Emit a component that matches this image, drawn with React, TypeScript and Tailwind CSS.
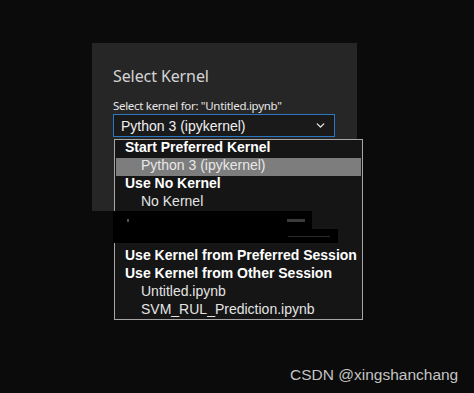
import { ChevronDown } from "lucide-react";

const rows: { label: string; bold?: boolean; selected?: boolean }[] = [
  { label: "Start Preferred Kernel", bold: true },
  { label: "Python 3 (ipykernel)", selected: true },
  { label: "Use No Kernel", bold: true },
  { label: "No Kernel" },
  { label: "" },
  { label: "" },
  { label: "Use Kernel from Preferred Session", bold: true },
  { label: "Use Kernel from Other Session", bold: true },
  { label: "Untitled.ipynb" },
  { label: "SVM_RUL_Prediction.ipynb" },
];

export default function App() {
  return (
    <div className="relative w-[474px] h-[393px] overflow-hidden bg-[#0b0b0b] font-['Liberation_Sans',Arial,sans-serif]">
      {/* dialog */}
      <div className="ml-[92px] mt-[43px] w-[265px] h-[168px] bg-[#262626] pl-[21px] pt-[23px]">
        <h2 className="text-[16px] leading-[20px] text-[#d4d4d4] font-['Noto_Sans',sans-serif] tracking-[-0.1px]">
          Select Kernel
        </h2>
        <p className="mt-[13px] text-[11.5px] leading-[14px] text-[#e6e6e6] font-['Noto_Sans',sans-serif] tracking-[-0.3px]">
          Select kernel for: "Untitled.ipynb"
        </p>
        <div className="mt-[1px] w-[222px] h-[23px] border-[1.5px] border-[#2a78c4] bg-[#1a1a1a] flex items-center justify-between pl-[7px] pr-[7px]">
          <span className="text-[14px] text-[#f0f0f0] leading-none">Python 3 (ipykernel)</span>
          <ChevronDown className="w-[13px] h-[13px] text-[#e8e8e8]" strokeWidth={2.5} />
        </div>
      </div>

      {/* dropdown list */}
      <div className="absolute left-[114px] top-[139px] w-[249px] h-[181px] border border-[#a6a6a6] bg-[#151515] px-[1px]">
        {rows.map((r, i) => (
          <div
            key={i}
            className={`h-[18px] text-[14px] leading-[15px] ${
              r.bold ? "pl-[9px] font-bold text-white" : "pl-[25px] text-[#e4e4e4]"
            } ${r.selected ? "bg-[#7d7d7d] text-[#e8e8e8]" : ""}`}
          >
            {r.label}
          </div>
        ))}
      </div>

      {/* redaction */}
      <div className="absolute left-[113px] top-[211px] flex flex-col">
        <div className="w-[199px] h-[18px] bg-black flex items-center pl-[14px] pr-[7px] justify-between">
          <span className="w-[2px] h-[3px] bg-[#555]" />
          <span className="w-[18px] h-[3px] bg-[#3a3a3a]" />
        </div>
        <div className="w-[225px] h-[14px] bg-black flex items-center pl-[175px]">
          <span className="w-[42px] h-[1px] bg-[#2a2a2a]" />
        </div>
      </div>

      {/* watermark */}
      <div className="absolute left-[290px] top-[365px] text-[15.5px] leading-[20px] text-[#c4c4c4]">
        CSDN @xingshanchang
      </div>
    </div>
  );
}
